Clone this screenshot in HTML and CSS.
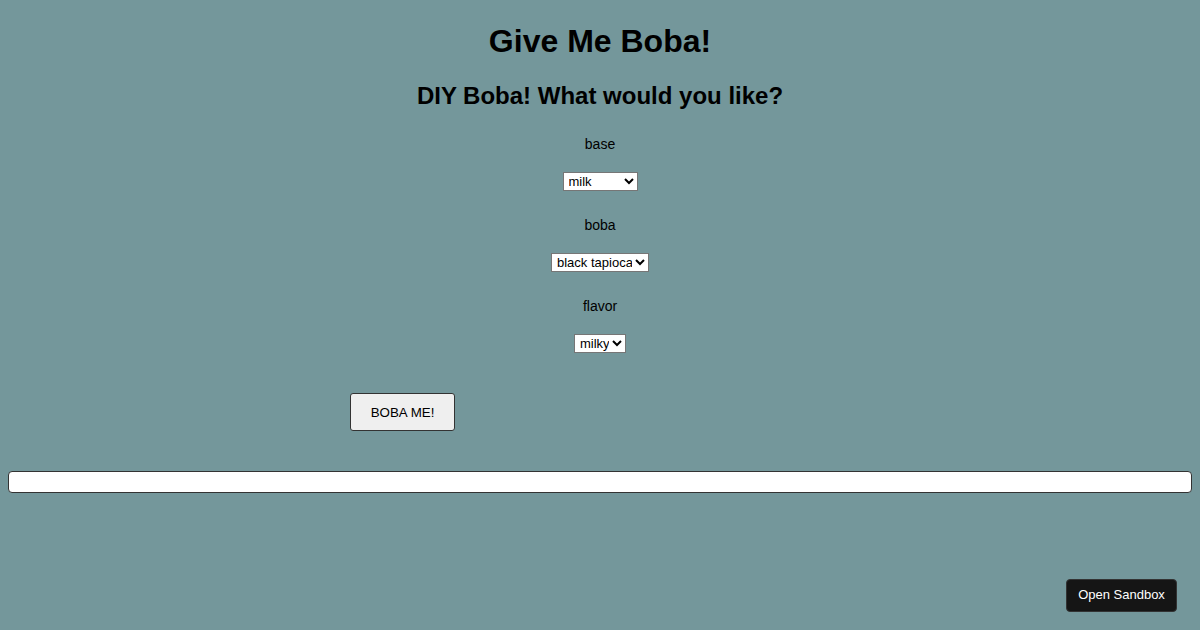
FILE: index.html
```html
<!DOCTYPE html>
<html>
<head>
<meta charset="utf-8">
<link rel="stylesheet" href="styles.css">
</head>
<body>
<h1 class="title">Give Me Boba!</h1>
<h2 class="subtitle">DIY Boba! What would you like?</h2>
<div class="form">
  <div class="field">
    <label class="label" for="base">base</label>
    <select id="base" class="sel sel-base"><option>milk</option><option>water</option></select>
  </div>
  <div class="field">
    <label class="label" for="boba">boba</label>
    <select id="boba" class="sel sel-boba"><option>black tapioca</option><option>lychee</option></select>
  </div>
  <div class="field">
    <label class="label" for="flavor">flavor</label>
    <select id="flavor" class="sel sel-flavor"><option>milky</option><option>fruity</option></select>
  </div>
</div>
<div class="actions">
  <button class="boba-btn" type="button">BOBA ME!</button>
</div>
<div class="output"></div>
<a class="sandbox" href="#">Open Sandbox</a>
</body>
</html>
```

FILE: styles.css
```css
html, body {
  background: #74979b;
}
body {
  margin: 8px;
  font-family: "Liberation Sans", Arial, sans-serif;
  color: #000;
  height: 614px;
  position: relative;
}
.title {
  font-size: 32px;
  font-weight: bold;
  text-align: center;
  margin: 15px 0 0;
  line-height: 37px;
}
.subtitle {
  font-size: 24px;
  font-weight: bold;
  text-align: center;
  margin: 22px 0 0;
  line-height: 28px;
}
.form {
  display: flex;
  flex-direction: column;
  align-items: center;
  margin-top: 25px;
}
.field {
  display: flex;
  flex-direction: column;
  align-items: center;
  height: 81px;
}
.label {
  font-size: 14px;
  line-height: 16px;
  margin-top: 1px;
}
.sel {
  margin-top: 20px;
  height: 19px;
  font-family: "Liberation Sans", Arial, sans-serif;
  font-size: 13px;
  background: #fff;
  color: #000;
  border: 1px solid #767676;
  border-radius: 0;
  padding: 0 0 0 1px;
}
.sel-base { width: 75px; }
.sel-boba { width: 98px; }
.sel-flavor { width: 52px; }
.actions {
  width: 500px;
  margin: 15px auto 0;
}
.boba-btn {
  display: block;
  width: 105px;
  height: 38px;
  background: #efefef;
  border: 1px solid #333;
  border-radius: 3px;
  font-family: "Liberation Sans", Arial, sans-serif;
  font-size: 13.33px;
  color: #000;
  padding: 0;
}
.output {
  margin-top: 40px;
  height: 20px;
  background: #fff;
  border: 1px solid #333;
  border-radius: 4px;
}
.sandbox {
  position: absolute;
  right: 15px;
  bottom: 10px;
  width: 111px;
  height: 33px;
  box-sizing: border-box;
  background: #151515;
  color: #fff;
  border: 1px solid #333;
  border-radius: 4px;
  font-size: 13px;
  line-height: 29px;
  text-align: center;
  text-decoration: none;
}
```
